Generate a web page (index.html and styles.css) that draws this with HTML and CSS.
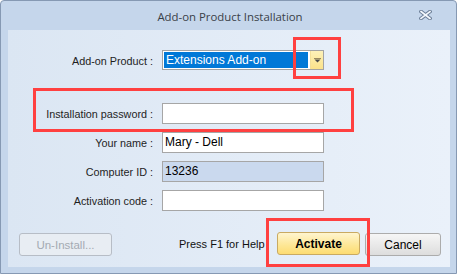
FILE: index.html
```html
<!DOCTYPE html>
<html>
<head>
<meta charset="utf-8">
<link rel="stylesheet" href="styles.css">
</head>
<body>
<div class="window">
  <div class="titlebar">
    <span class="title">Add-on Product Installation</span>
    <svg class="close" width="13" height="10" viewBox="0 0 13 10">
      <path d="M2 1.5 L11 8.5 M11 1.5 L2 8.5" stroke="#6d7f98" stroke-width="3.6" stroke-linecap="square" fill="none"/>
      <path d="M2 1.5 L11 8.5 M11 1.5 L2 8.5" stroke="#f4f8fd" stroke-width="1.6" stroke-linecap="square" fill="none"/>
    </svg>
  </div>
  <div class="content">
    <div class="form">
      <label class="lbl first">Add-on Product :</label>
      <div class="combo">
        <div class="combo-sel">Extensions Add-on</div>
        <div class="combo-btn">
          <svg width="7" height="5" viewBox="0 0 7 5"><rect x="0" y="0" width="7" height="1" fill="#9a8a60"/><path d="M0.5 1.5 H6.5 L3.5 4.5 Z" fill="#4a4a4a"/></svg>
        </div>
      </div>
      <label class="lbl">Installation password :</label>
      <div class="input"></div>
      <label class="lbl">Your name :</label>
      <div class="input">Mary - Dell</div>
      <label class="lbl">Computer ID :</label>
      <div class="input readonly">13236</div>
      <label class="lbl">Activation code :</label>
      <div class="input"></div>
    </div>
    <div class="buttons">
      <button class="btn disabled">Un-Install...</button>
      <span class="help">Press F1 for Help</span>
      <button class="btn primary">Activate</button>
      <button class="btn cancel">Cancel</button>
    </div>
    <div class="mark mark-combo"></div>
    <div class="mark mark-pw"></div>
    <div class="mark mark-act"></div>
  </div>
</div>
</body>
</html>
```
FILE: styles.css
```css
* { box-sizing: border-box; }
html, body { margin: 0; padding: 0; }
body {
  width: 457px;
  height: 274px;
  overflow: hidden;
  background: #ffffff;
  font-family: "Liberation Sans", Arial, sans-serif;
}
.window {
  width: 457px;
  height: 274px;
  background: #c5d6eb;
  border: 1px solid #8699b3;
  border-radius: 4px 4px 0 0;
  padding: 0 6px 6px 7px;
  display: flex;
  flex-direction: column;
}
.titlebar {
  height: 29px;
  position: relative;
  display: flex;
  align-items: center;
  justify-content: center;
}
.title {
  font-family: "Open Sans", "Noto Sans", sans-serif;
  font-size: 11.4px;
  color: #3a3f48;
  margin-top: 2px;
  margin-left: 2px;
}
.close {
  position: absolute;
  right: 18px;
  top: 9px;
}
.content {
  flex: 1;
  position: relative;
  background: linear-gradient(to right, #dbe6f3, #eaf1fa);
}
.form {
  display: grid;
  grid-template-columns: 145px 162px;
  grid-template-rows: 45px 21px 21px 21px 21px;
  column-gap: 9px;
  row-gap: 8px;
  padding-top: 20px;
}
.lbl {
  font-size: 10.8px;
  color: #1e1e1e;
  text-align: right;
  display: flex;
  align-items: center;
  justify-content: flex-end;
  padding-top: 1px;
}
.lbl.first {
  align-self: start;
  height: 20px;
}
.combo {
  align-self: start;
  height: 20px;
  border: 1px solid #a3a3a3;
  background: #fff;
  display: flex;
  padding: 1px;
}
.combo-sel {
  flex: 1;
  background: #0078d7;
  color: #fff;
  font-size: 12px;
  line-height: 16px;
  padding-left: 2px;
}
.combo-btn {
  width: 13px;
  margin: -1px -1px -1px 2px;
  background: linear-gradient(#fdf1b8, #fbe28a);
  border-left: 1px solid #f3df9a;
  display: flex;
  align-items: center;
  justify-content: center;
}
.input {
  border: 1px solid #a6a6a6;
  background: #fff;
  font-size: 12px;
  color: #000;
  padding: 1px 0 0 2px;
  line-height: 16px;
}
.input.readonly { background: #cad9ee; }
.buttons {
  display: flex;
  align-items: center;
  margin-top: 22px;
  padding-left: 11px;
  padding-right: 9px;
}
.btn {
  font-family: "Liberation Sans", Arial, sans-serif;
  font-size: 11.5px;
  height: 23px;
  border-radius: 3px;
  padding: 0;
}
.btn.disabled {
  width: 93px;
  background: #e8edf3;
  border: 1px solid #b7bdc6;
  color: #a4aab2;
}
.help {
  font-size: 11px;
  color: #111;
  margin-left: 67px;
  padding-bottom: 2px;
}
.btn.primary {
  margin-left: auto;
  margin-top: -2px;
  width: 83px;
  background: linear-gradient(#fff5cf, #fde693 60%, #fddc72);
  border: 1px solid #c9aa62;
  font-weight: bold;
  color: #000;
  font-size: 12px;
}
.btn.cancel {
  margin-left: 5px;
  width: 76px;
  background: linear-gradient(#f6f6f6, #dddddd);
  border: 1px solid #acacac;
  color: #000;
  font-size: 12px;
}
.mark {
  position: absolute;
  border: 3px solid #ff4040;
}
.mark-combo { left: 285px; top: 7px; width: 48px; height: 42px; }
.mark-pw { left: 25px; top: 58px; width: 321px; height: 44px; }
.mark-act { left: 258px; top: 188px; width: 104px; height: 49px; }
```
